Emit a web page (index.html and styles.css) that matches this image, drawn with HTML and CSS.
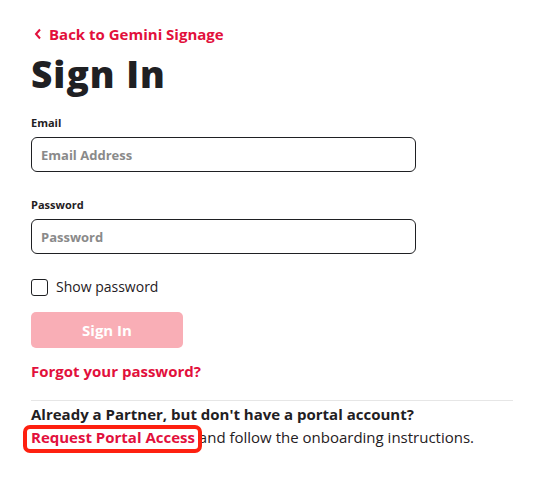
FILE: index.html
```html
<!DOCTYPE html>
<html lang="en">
<head>
<meta charset="utf-8">
<title>Sign In</title>
<link rel="stylesheet" href="styles.css">
</head>
<body>
<main class="page">
  <a class="back" href="#"><svg class="chev" width="8" height="12" viewBox="0 0 8 12"><path d="M6 1.5 L2 6 L6 10.5" fill="none" stroke="currentColor" stroke-width="2"/></svg>Back to Gemini Signage</a>
  <h1 class="title">Sign In</h1>
  <form class="form">
    <label class="label" for="email">Email</label>
    <input class="input" id="email" type="text" placeholder="Email Address">
    <label class="label label-pw" for="pw">Password</label>
    <input class="input" id="pw" type="password" placeholder="Password">
    <label class="check"><span class="box"></span>Show password</label>
    <button class="btn" type="button">Sign In</button>
  </form>
  <a class="forgot" href="#">Forgot your password?</a>
  <hr class="divider">
  <p class="partner">Already a Partner, but don't have a portal account?</p>
  <p class="request"><a class="req-link" href="#">Request Portal Access</a> and follow the onboarding instructions.</p>
</main>
</body>
</html>
```
FILE: styles.css
```css
* { box-sizing: border-box; }
html, body { margin: 0; padding: 0; background: #fff; }
body { font-family: "Open Sans", "Noto Sans", sans-serif; color: #1f2023; }
.page { padding: 24px 38px 40px 31px; width: 551px; }
.back { display: flex; align-items: center; gap: 7px; color: #e2103c; font-weight: 700; font-size: 15px; text-decoration: none; margin-left: 3px; height: 20px; }
.chev { display: block; }
.title { font-size: 37px; font-weight: 800; margin: 7px 0 0; line-height: 46px; letter-spacing: 1px; }
.form { display: flex; flex-direction: column; align-items: flex-start; }
.label { font-size: 11px; font-weight: 700; margin-top: 18px; line-height: 16px; }
.label-pw { margin-top: 25px; }
.input { margin-top: 6px; width: 385px; height: 35px; border: 1px solid #1f2023; border-radius: 6px; padding: 0 9px; font-family: inherit; font-size: 13px; font-weight: 700; color: #1f2023; }
.input::placeholder { color: #8a8a8a; }
.check { display: flex; align-items: center; gap: 8px; margin-top: 23px; font-size: 14px; line-height: 20px; }
.box { width: 17px; height: 17px; border: 1px solid #1f2023; border-radius: 3px; }
.btn { margin-top: 15px; width: 152px; height: 36px; border: none; border-radius: 5px; background: #f9aeb6; color: #fff; font-family: inherit; font-weight: 700; font-size: 15px; }
.forgot { display: block; margin-top: 13px; color: #e2103c; font-weight: 700; font-size: 15px; text-decoration: none; line-height: 20px; }
.divider { border: 0; border-top: 1px solid #e6e6e6; margin: 19px 0 0; }
.partner { margin: 3px 0 0; font-weight: 700; font-size: 15px; line-height: 20px; }
.request { margin: 3px 0 0; font-size: 15px; line-height: 20px; }
.req-link { position: relative; display: inline-block; color: #e2103c; font-weight: 700; text-decoration: none; }
.req-link::after { content: ""; position: absolute; left: -8px; right: -7px; top: -2px; bottom: -6px; border: 4px solid #fe2010; border-radius: 7px; }
```
